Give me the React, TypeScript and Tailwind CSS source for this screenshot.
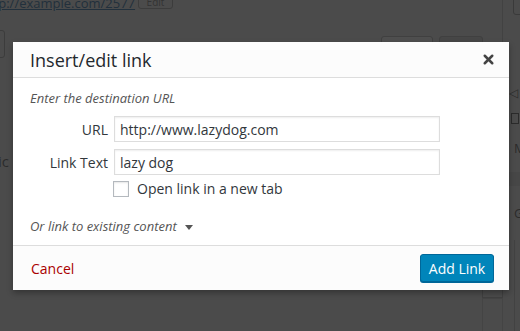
import { X } from "lucide-react";

function Backdrop() {
  return (
    <>
      <div className="absolute left-[-19px] top-[-6px] text-[13px] text-[#22303c] underline">
        http://example.com/2577
      </div>
      <div className="absolute left-[138px] top-[-4px] h-[13px] w-[35px] rounded-[3px] border border-[#3c3c3c] text-center text-[10px] leading-[10px] text-[#333]">
        Edit
      </div>
      <div className="absolute left-[-6px] top-[30px] h-[28px] w-[11px] rounded-[3px] border border-[#3c3c3c]" />
      <div className="absolute left-[381px] top-[36px] h-[20px] w-[52px] rounded-[3px] border border-[#404040] bg-[#4f4f4f]" />
      <div className="absolute left-[439px] top-[36px] h-[20px] w-[44px] rounded-[3px] border border-[#404040] bg-[#474747]" />
      <div className="absolute left-[502px] top-0 h-[331px] w-px bg-[#424242]" />
      <div className="absolute left-[513px] top-[-4px] h-[19px] w-[12px] rounded-[3px] border border-[#3a3a3a]" />
      <div className="absolute left-[509px] top-[84px] text-[12px] text-[#2b2b2b]">◁</div>
      <div className="absolute left-[511px] top-[113px] h-[11px] w-[8px] border border-[#2b2b2b]" />
      <div className="absolute left-[514px] top-[139px] text-[13px] text-[#2b2b2b]">M</div>
      <div className="absolute left-[509px] top-[172px] h-[14px] w-[11px] bg-[#474747]" />
      <div className="absolute left-[514px] top-[204px] text-[13px] text-[#2b2b2b]">G</div>
      <div className="absolute left-[514px] top-[240px] h-[91px] w-[6px] border-l border-[#424242]" />
      <div className="absolute left-[-2px] top-[150px] text-[15px] text-[#2b2b2b]">ic</div>
      <div className="absolute left-[482px] top-[290px] h-[8px] w-[21px] border border-t-0 border-[#404040]" />
      <div className="absolute left-[482px] top-[298px] h-[40px] w-[21px] border border-[#444]" />
    </>
  );
}

export default function App() {
  return (
    <div
      className="relative h-[331px] w-[520px] overflow-hidden bg-[#4b4b4b]"
      style={{ fontFamily: '"Open Sans", "Noto Sans", sans-serif' }}
    >
      <Backdrop />
      <div className="absolute left-[13px] top-[42px] flex h-[248px] w-[496px] flex-col bg-white shadow-[0_3px_6px_rgba(0,0,0,0.3)]">
        <div className="flex h-[36px] items-center justify-between border-b border-[#dddddd] bg-[#fcfcfc] pl-[17px] pr-[13px]">
          <h1 className="text-[18px] font-medium leading-none text-[#23282d]">Insert/edit link</h1>
          <X className="h-[15px] w-[15px] text-[#444]" strokeWidth={4} />
        </div>

        <div className="flex flex-1 flex-col px-[17px] pt-[11px]">
          <p className="text-[13px] italic leading-[18px] text-[#555]">Enter the destination URL</p>

          <div className="mt-[9px] flex items-center gap-[6px]">
            <label className="w-[78px] text-right text-[14px] text-[#32373c]">URL</label>
            <div className="flex h-[26px] w-[326px] items-center border border-[#dddddd] px-[5px] text-[14px] text-[#32373c] shadow-[inset_0_1px_2px_rgba(0,0,0,0.07)]">
              http://www.lazydog.com
            </div>
          </div>

          <div className="mt-[7px] flex items-center gap-[6px]">
            <label className="w-[78px] text-right text-[14px] text-[#32373c]">Link Text</label>
            <div className="flex h-[26px] w-[326px] items-center border border-[#dddddd] px-[5px] text-[14px] text-[#32373c] shadow-[inset_0_1px_2px_rgba(0,0,0,0.07)]">
              lazy dog
            </div>
          </div>

          <div className="mt-[6px] flex items-center gap-[8px] pl-[83px]">
            <div className="h-[16px] w-[16px] border border-[#b4b9be] bg-white shadow-[inset_0_1px_2px_rgba(0,0,0,0.1)]" />
            <span className="text-[14px] leading-none text-[#32373c]">Open link in a new tab</span>
          </div>

          <div className="mt-[20px] flex items-center gap-[8px]">
            <span className="text-[13px] italic text-[#555]">Or link to existing content</span>
            <svg width="8" height="6" viewBox="0 0 8 6" className="mt-[2px]">
              <path d="M0 0 L8 0 L4 5 Z" fill="#555" />
            </svg>
          </div>
        </div>

        <div className="flex h-[45px] items-center justify-between border-t border-[#dddddd] bg-[#fcfcfc] pl-[18px] pr-[15px]">
          <span className="text-[14px] text-[#a00]">Cancel</span>
          <button className="h-[28px] w-[74px] rounded-[3px] border border-[#006799] bg-[#0085ba] text-[14px] text-white shadow-[0_1px_0_#006799]">
            Add Link
          </button>
        </div>
      </div>
    </div>
  );
}
